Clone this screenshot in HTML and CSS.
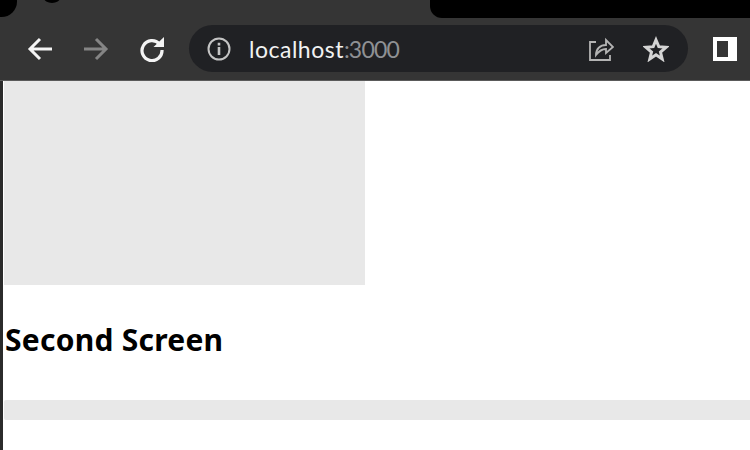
FILE: index.html
```html
<!DOCTYPE html>
<html lang="en">
<head>
    <meta charset="UTF-8">
    <title>Second Screen</title>
    <link rel="stylesheet" href="styles.css">
</head>
<body>
    <!-- Browser frame: tab strip and toolbar -->
    <header class="browser">
        <div class="tab-strip">
            <div class="corner-dot"></div>
            <div class="small-dot"></div>
            <div class="black-panel"></div>
        </div>
        <div class="toolbar">
            <div class="nav-icons">
                <svg class="icon" viewBox="0 0 26 26"><path d="M25 13H4M13 3L3 13l10 10" fill="none" stroke="#f4f4f4" stroke-width="3"/></svg>
                <svg class="icon" viewBox="0 0 26 26"><path d="M1 13h21M13 3l10 10-10 10" fill="none" stroke="#858585" stroke-width="3"/></svg>
                <svg class="icon" viewBox="0 0 26 26"><path d="M20.500 8A10 10 0 1 0 23 14" fill="none" stroke="#f4f4f4" stroke-width="3.200"/><path d="M14.500 11H25V1z" fill="#f4f4f4"/></svg>
            </div>
            <div class="omnibox">
                <svg class="info-icon" viewBox="0 0 24 24"><circle cx="12" cy="12" r="10.500" fill="none" stroke="#c4c4c4" stroke-width="2"/><path d="M10.700 10h2.600v8h-2.600zM10.700 5.800h2.600v2.600h-2.600z" fill="#c4c4c4"/></svg>
                <span class="url">localhost<span class="url-port">:3000</span></span>
                <svg class="share-icon" viewBox="0 0 26 26"><path d="M8 6H2v18h20v-5" fill="none" stroke="#b4b4b4" stroke-width="1.800"/><path d="M8 19c0-6 4-10 10-10V4l7 7-7 6v-4c-4 0-7 2-10 6z" fill="none" stroke="#b4b4b4" stroke-width="1.800"/></svg>
                <svg class="star-icon" viewBox="0 0 26 26"><path d="M13 4l2.800 6.700 7.200.6-5.500 4.700 1.700 7L13 18.800 6.800 23l1.700-7L3 11.300l7.200-.6z" fill="none" stroke="#d4d4d4" stroke-width="3"/></svg>
            </div>
            <div class="sidebar-icon"></div>
        </div>
    </header>

    <!-- Page content -->
    <div class="viewport">
        <div class="window-edge"></div>
        <main class="page">
            <div class="placeholder-image"></div>
            <h1 class="title">Second Screen</h1>
            <div class="placeholder-bar"></div>
        </main>
    </div>
</body>
</html>
```

FILE: styles.css
```css
html, body {
    height: 100%;
    margin: 0;
    overflow: hidden;
    background-color: #fff;
}
body {
    display: flex;
    flex-direction: column;
    font-family: 'Noto Sans', 'Open Sans', sans-serif;
}
.browser {
    background-color: #353535;
    height: 81px;
    flex-shrink: 0;
    border-bottom: 1px solid #5a5a5a;
    box-sizing: border-box;
}
/* Tab strip with the cropped black shapes */
.tab-strip {
    position: relative;
    height: 25px;
    display: flex;
    justify-content: flex-end;
    align-items: flex-start;
}
.corner-dot {
    position: absolute;
    left: -14px;
    top: -14px;
    width: 31px;
    height: 31px;
    border-radius: 50%;
    background: #000;
}
.small-dot {
    position: absolute;
    left: 44px;
    top: -7px;
    width: 16px;
    height: 10px;
    border-radius: 50%;
    background: #000;
}
.black-panel {
    width: 320px;
    height: 18px;
    background: #000;
    border-bottom-left-radius: 12px;
}
.toolbar {
    display: flex;
    align-items: flex-start;
    height: 47px;
}
.nav-icons {
    display: flex;
    gap: 30px;
    padding: 11px 0 0 27px;
    width: 189px;
    box-sizing: border-box;
    flex-shrink: 0;
}
.icon {
    width: 26px;
    height: 26px;
    flex-shrink: 0;
}
.omnibox {
    display: flex;
    align-items: center;
    width: 499px;
    height: 47px;
    flex-shrink: 0;
    background-color: #202124;
    border-radius: 24px;
    box-sizing: border-box;
    padding-left: 18px;
}
.info-icon {
    width: 24px;
    height: 24px;
}
.url {
    margin-left: 18px;
    font-family: 'Lato', 'Noto Sans', sans-serif;
    font-size: 23px;
    letter-spacing: 0.5px;
    color: #f2f2f2;
    flex-grow: 1;
}
.url-port {
    color: #8f9194;
    letter-spacing: -0.8px;
}
.share-icon {
    width: 26px;
    height: 26px;
    margin-right: 29px;
}
.star-icon {
    width: 26px;
    height: 26px;
    margin-right: 19px;
}
.sidebar-icon {
    width: 24px;
    height: 24px;
    margin: 12px 0 0 25px;
    border: 4px solid #fff;
    border-right-width: 9px;
    box-sizing: border-box;
    background: #353535;
    flex-shrink: 0;
}
.viewport {
    display: flex;
    flex-grow: 1;
}
.window-edge {
    width: 3px;
    background-color: #2b2b2b;
    flex-shrink: 0;
}
.page {
    flex-grow: 1;
    padding-left: 1px;
}
.placeholder-image {
    width: 361px;
    height: 204px;
    background-color: #e8e8e8;
}
.title {
    margin: 34px 0 40px 1px;
    font-size: 30px;
    line-height: 41px;
    letter-spacing: 0.25px;
    font-weight: 700;
    color: #000;
}
.placeholder-bar {
    height: 20px;
    background-color: #e8e8e8;
    border-radius: 2px 0 0 2px;
}
```
